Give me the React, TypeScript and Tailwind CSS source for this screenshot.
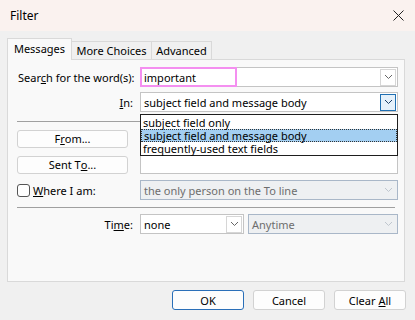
import React from 'react';

const font = { fontFamily: '"Noto Sans", "Segoe UI", sans-serif' };

const Chevron: React.FC<{ color?: string }> = ({ color = '#555' }) => (
    <svg width="9" height="6" viewBox="0 0 9 6" fill="none">
        <path d="M1 1l3.5 3.5L8 1" stroke={color} strokeWidth="1" />
    </svg>
);

const Combo: React.FC<{ value?: string; width: string; active?: boolean; highlight?: boolean; disabled?: boolean }> = ({
    value,
    width,
    active,
    highlight,
    disabled,
}) => (
    <div
        className={`${width} h-[20px] flex items-center border ${
            disabled ? 'border-[#a9b7c8] bg-[#eef0f2]' : 'border-[#c4c4c4] bg-white'
        } relative`}
    >
        {highlight && <div className="absolute left-[-1px] top-[-1px] w-[97px] h-[20px] border-2 border-[#f48ff0]" />}
        <span className={`pl-[3px] flex-1 whitespace-nowrap ${disabled ? 'text-[#6d6d6d]' : 'text-black'}`}>{value}</span>
        <div
            className={`w-[16px] h-[17px] mr-[1px] flex items-center justify-center border ${
                active ? 'border-[#1f6fb2] bg-[#e5f1fb]' : disabled ? 'border-transparent' : 'border-[#d6d6d6] bg-white'
            }`}
        >
            <Chevron color={disabled ? '#bfc6ce' : active ? '#1a3d66' : '#666'} />
        </div>
    </div>
);

const Btn: React.FC<{ children: React.ReactNode; primary?: boolean; w?: string; h?: string }> = ({ children, primary, w = 'w-[72px]', h = 'h-[20px]' }) => (
    <div
        className={`${w} ${h} flex items-center justify-center whitespace-nowrap bg-[#fdfdfd] rounded-[3px] border ${
            primary ? 'border-[#2a6fb8]' : 'border-[#d2d2d2]'
        }`}
    >
        {children}
    </div>
);

const App: React.FC = () => {
    return (
        <div className="w-[415px] h-[320px] bg-[#f0f0f0] text-[11px] text-black relative overflow-hidden leading-none" style={font}>
            {/* title bar */}
            <div className="h-[31px] bg-[#faf2ef] flex items-center justify-between pl-[10px] pr-[11px]">
                <span className="text-[12px] mt-[1px]">Filter</span>
                <svg width="11" height="11" viewBox="0 0 11 11">
                    <path d="M0.5 0.5l10 10M10.5 0.5l-10 10" stroke="#222" strokeWidth="1" />
                </svg>
            </div>

            {/* tabs */}
            <div className="flex items-end pl-[7px] pt-[7px] h-[28px] whitespace-nowrap">
                <div className="w-[65px] h-[22px] bg-[#f9f9f9] border border-b-0 border-[#d9d9d9] flex items-center justify-center relative z-10 mb-[-1px] pb-[3px]">
                    Messages
                </div>
                <div className="w-[80px] h-[18px] bg-[#f0f0f0] border border-l-0 border-b-0 border-[#d9d9d9] flex items-center justify-center">
                    More Choices
                </div>
                <div className="w-[60px] h-[18px] bg-[#f0f0f0] border border-l-0 border-b-0 border-[#d9d9d9] flex items-center justify-center">
                    Advanced
                </div>
            </div>

            {/* panel */}
            <div className="ml-[7px] w-[398px] h-[223px] bg-[#f9f9f9] border border-[#d9d9d9] relative pl-[9px] pt-[7px]">
                <div className="flex items-center h-[20px]">
                    <div className="w-[123px] whitespace-nowrap pl-[1px]">
                        Sear<span className="underline">c</span>h for the word(s):
                    </div>
                    <Combo value="important" width="w-[258px]" highlight />
                </div>
                <div className="flex items-center h-[20px] mt-[5px]">
                    <div className="w-[123px] text-right pr-[7px]">
                        <span className="underline">I</span>n:
                    </div>
                    <Combo value="subject field and message body" width="w-[258px]" active />
                </div>

                <div className="h-px bg-[#a0a0a0] mt-[9px] w-[379px]" />

                <div className="flex items-center mt-[7px] h-[19px]">
                    <Btn w="w-[111px]" h="h-[18px]">
                        F<span className="underline">r</span>om...
                    </Btn>
                    <div className="ml-[12px] w-[258px] h-[19px] bg-white border border-[#c4c4c4]" />
                </div>
                <div className="flex items-center mt-[7px] h-[19px]">
                    <Btn w="w-[111px]" h="h-[18px]">
                        Sent T<span className="underline">o</span>...
                    </Btn>
                    <div className="ml-[12px] w-[258px] h-[19px] bg-white border border-[#c4c4c4]" />
                </div>

                <div className="flex items-center mt-[6px] h-[20px]">
                    <div className="w-[123px] flex items-center whitespace-nowrap">
                        <div className="w-[13px] h-[13px] border border-[#555] rounded-[3px] bg-white" />
                        <span className="ml-[3px]">
                            <span className="underline">W</span>here I am:
                        </span>
                    </div>
                    <Combo value="the only person on the To line" width="w-[258px]" disabled />
                </div>

                <div className="h-px bg-[#a0a0a0] mt-[7px] w-[378px]" />

                <div className="flex items-center mt-[6px] h-[20px]">
                    <div className="w-[123px] text-right pr-[7px]">
                        Ti<span className="underline">m</span>e:
                    </div>
                    <Combo value="none" width="w-[104px]" />
                    <div className="ml-[4px]">
                        <Combo value="Anytime" width="w-[150px]" disabled />
                    </div>
                </div>

                {/* open dropdown list */}
                <div className="absolute left-[132px] top-[54px] w-[258px] h-[42px] bg-white border border-[#1e1e1e] pt-[1px] whitespace-nowrap leading-[11px]">
                    <div className="h-[13px] flex items-center pl-[2px]">subject field only</div>
                    <div className="h-[13px] flex items-center pl-[2px] bg-[#a3cff2] border border-dotted border-[#333]">
                        subject field and message body
                    </div>
                    <div className="h-[13px] flex items-center pl-[2px]">frequently-used text fields</div>
                </div>
            </div>

            {/* footer buttons */}
            <div className="flex justify-end gap-[9px] pr-[9px] mt-[8px]">
                <Btn primary>OK</Btn>
                <Btn>Cancel</Btn>
                <Btn>
                    Clear <span className="underline ml-[3px]">A</span>ll
                </Btn>
            </div>
        </div>
    );
};

export default App;
